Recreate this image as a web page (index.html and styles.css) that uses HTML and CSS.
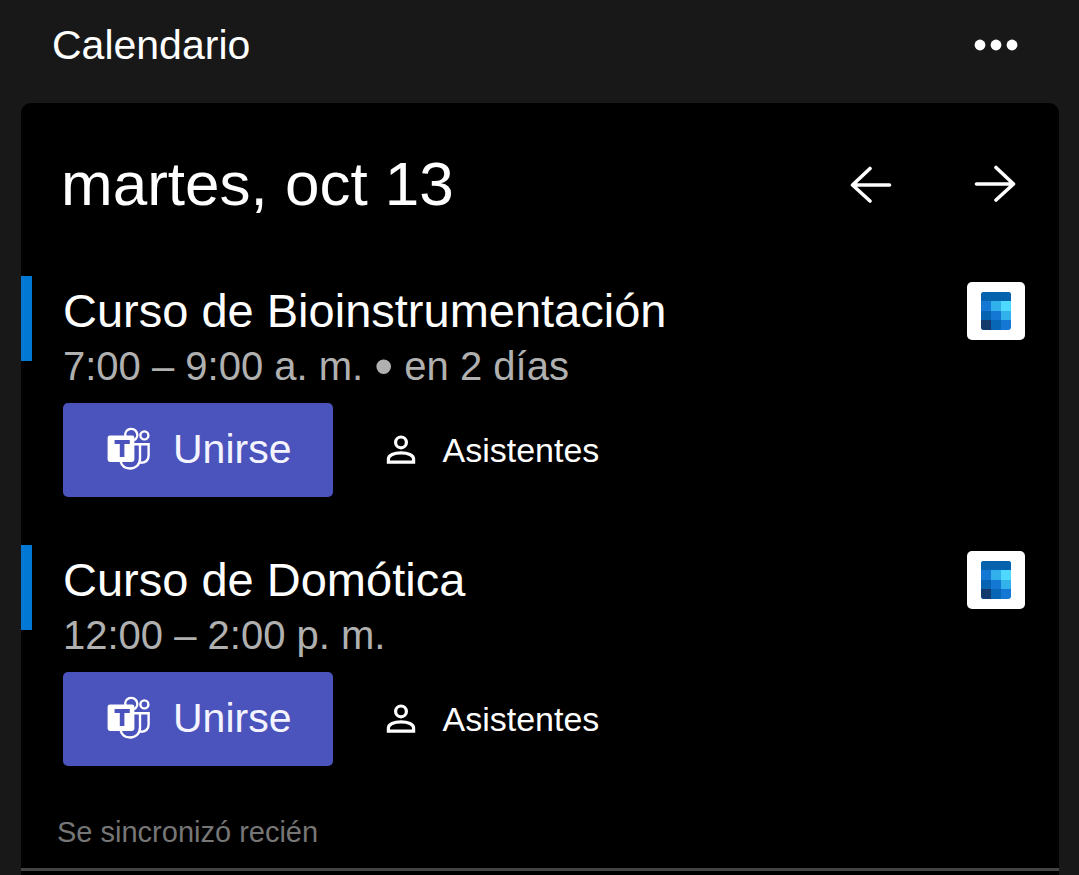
FILE: index.html
```
<!DOCTYPE html>
<html lang="es">

<head>
  <meta charset="UTF-8">
  <meta name="viewport" content="width=device-width, initial-scale=1.0">
  <title>Calendario</title>
  <link rel="stylesheet" href="styles.css">
</head>

<body>

  <!-- shared icons -->
  <svg class="sprite" aria-hidden="true">
    <symbol id="teams" viewBox="0 0 44 44">
      <g fill="none" stroke="#fff" stroke-width="2.4">
        <path d="M18.5 9.5A6 6 0 1 1 27 13.2" />
        <circle cx="37.4" cy="8.4" r="4" />
        <path d="M27 17.2h6v14.3c0 6-4.2 10-9.8 10-4.8 0-8.6-3-9.8-7.5" />
        <path d="M33 17.2h8.6v11.4c0 4.6-3.2 7.2-8.4 7.2" />
      </g>
      <rect x="0.6" y="8.4" width="26.8" height="26.6" rx="2.4" fill="#fff" />
      <path d="M7.6 13h15.2v4h-5.4v13h-4.6V17H7.6z" fill="#4b53bc" />
    </symbol>
    <symbol id="person" viewBox="0 0 30 30">
      <g fill="none" stroke="#fff" stroke-width="3.2">
        <circle cx="15" cy="7.4" r="5.4" />
        <path d="M2.4 27.1v-3.1c0-3.9 5.6-6.2 12.6-6.2s12.6 2.3 12.6 6.2v3.1z" />
      </g>
    </symbol>
    <symbol id="calendar" viewBox="0 0 30 38">
      <clipPath id="round"><rect width="30" height="38" rx="3" /></clipPath>
      <g clip-path="url(#round)">
        <rect width="30" height="38" fill="#1377d3" />
        <rect width="30" height="9" fill="#0562ad" />
        <rect x="10" y="9" width="10" height="10" fill="#32b0ec" />
        <rect x="20" y="9" width="10" height="10" fill="#50d9ff" />
        <rect y="19" width="10" height="9" fill="#0663b1" />
        <rect x="20" y="19" width="10" height="9" fill="#33b1ea" />
        <rect y="28" width="10" height="10" fill="#143a6d" />
        <rect x="10" y="28" width="10" height="10" fill="#0766b5" />
      </g>
    </symbol>
  </svg>

  <header class="header">
    <h1>Calendario</h1>
    <button class="icon-btn" type="button" aria-label="Más opciones">
      <svg width="44" height="12" viewBox="0 0 44 12" fill="#fff">
        <circle cx="6" cy="6" r="5.4" />
        <circle cx="22" cy="6" r="5.4" />
        <circle cx="38" cy="6" r="5.4" />
      </svg>
    </button>
  </header>

  <main class="card">
    <div class="day">
      <h2>martes, oct 13</h2>
      <div class="day-nav">
        <button class="icon-btn" type="button" aria-label="Día anterior">
          <svg class="arrow" viewBox="0 0 42 38">
            <path d="M39.5 20H2.5M20 3.5L2.5 20 20 36" />
          </svg>
        </button>
        <button class="icon-btn" type="button" aria-label="Día siguiente">
          <svg class="arrow" viewBox="0 0 42 38">
            <path d="M2.5 19h37M22 2.5L39.5 19 22 35" />
          </svg>
        </button>
      </div>
    </div>

    <section class="events">
      <article class="event">
        <div class="bar"></div>
        <div class="event-body">
          <h3>Curso de Bioinstrumentación</h3>
          <p class="time">7:00 – 9:00 a. m. <span class="dot">•</span> en 2 días</p>
          <div class="actions">
            <button class="join" type="button"><svg class="teams"><use href="#teams" /></svg>Unirse</button>
            <button class="people" type="button"><svg class="person"><use href="#person" /></svg>Asistentes</button>
          </div>
        </div>
        <div class="badge"><svg class="calendar"><use href="#calendar" /></svg></div>
      </article>

      <article class="event">
        <div class="bar"></div>
        <div class="event-body">
          <h3>Curso de Domótica</h3>
          <p class="time">12:00 – 2:00 p. m.</p>
          <div class="actions">
            <button class="join" type="button"><svg class="teams"><use href="#teams" /></svg>Unirse</button>
            <button class="people" type="button"><svg class="person"><use href="#person" /></svg>Asistentes</button>
          </div>
        </div>
        <div class="badge"><svg class="calendar"><use href="#calendar" /></svg></div>
      </article>
    </section>

    <p class="sync">Se sincronizó recién</p>
    <hr>
  </main>

</body>

</html>
```
FILE: styles.css
```
* {
  box-sizing: border-box;
}

body {
  margin: 0;
  min-height: 100vh;
  padding: 0 20px 0 21px;
  display: flex;
  flex-direction: column;
  background: #181818;
  color: #fff;
  font-family: "Liberation Sans", Arial, sans-serif;
}

h1,
h2,
h3,
p {
  margin: 0;
  font-weight: normal;
}

button {
  border: none;
  background: none;
  padding: 0;
  color: inherit;
  font-family: inherit;
  cursor: pointer;
}

svg {
  display: block;
}

.sprite {
  position: absolute;
  width: 0;
  height: 0;
}

.header {
  display: flex;
  justify-content: space-between;
  align-items: center;
  padding: 20px 41px 33px 31px;
}

.header h1 {
  font-size: 41px;
  line-height: 50px;
}

.card {
  flex: 1;
  background: #000;
  border-radius: 10px 10px 0 0;
}

.day {
  display: flex;
  justify-content: space-between;
  align-items: center;
  padding: 41px 43px 52px 40px;
}

.day h2 {
  font-size: 62px;
  line-height: 80px;
}

.day-nav {
  display: flex;
  gap: 82px;
}

.arrow {
  width: 42px;
  height: 38px;
  fill: none;
  stroke: #fff;
  stroke-width: 3.6;
  stroke-linecap: round;
  stroke-linejoin: round;
}

.events {
  display: flex;
  flex-direction: column;
  gap: 48px;
}

.event {
  display: flex;
  align-items: flex-start;
}

.bar {
  width: 11px;
  height: 85px;
  background: #0078d4;
}

.event-body {
  flex: 1;
  padding: 8px 0 0 31px;
}

.event h3 {
  font-size: 47px;
  line-height: 54px;
}

.time {
  font-size: 40px;
  line-height: 56px;
  color: #b0b0b0;
}

.dot {
  font-size: 54px;
  line-height: 0;
  vertical-align: -0.1em;
}

.actions {
  display: flex;
  align-items: center;
  gap: 53px;
  margin-top: 9px;
}

.join {
  display: flex;
  align-items: center;
  gap: 22px;
  height: 94px;
  padding: 0 42px 2px 44px;
  border-radius: 5px;
  background: #4b53bc;
  font-size: 41px;
  color: #f4f4ff;
}

.teams {
  width: 44px;
  height: 44px;
}

.people {
  display: flex;
  align-items: center;
  gap: 26px;
  font-size: 34px;
}

.person {
  width: 30px;
  height: 30px;
}

.badge {
  display: flex;
  align-items: center;
  justify-content: center;
  width: 58px;
  height: 58px;
  margin: 6px 34px 0 0;
  border-radius: 5px;
  background: #fff;
}

.calendar {
  width: 30px;
  height: 38px;
}

.sync {
  padding: 48px 36px 18px;
  font-size: 29px;
  line-height: 36px;
  color: #767676;
}

hr {
  margin: 0;
  border: none;
  border-top: 3px solid #444;
}
```
